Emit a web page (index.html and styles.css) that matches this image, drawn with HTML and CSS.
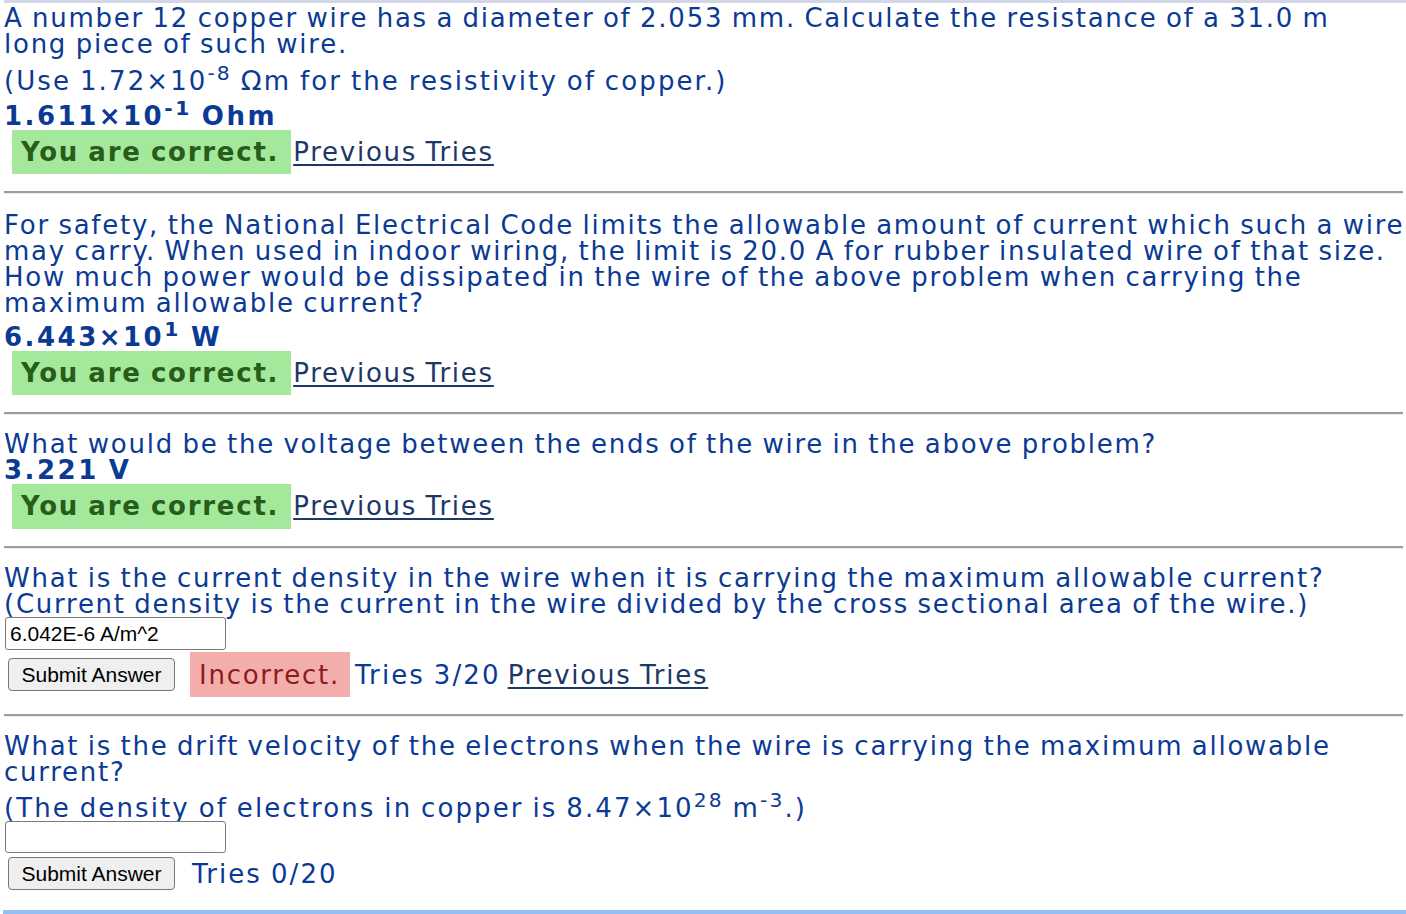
FILE: index.html
```html
<!DOCTYPE html>
<html>
<head>
<meta charset="utf-8">
<link rel="stylesheet" href="styles.css">
</head>
<body>
<div class="topbar"></div>
<div class="page">
  <section class="part p1">
    <div class="q">A number 12 copper wire has a diameter of 2.053 mm. Calculate the resistance of a 31.0 m<br>long piece of such wire.</div>
    <div class="q hint">(Use 1.72×10<sup>-8</sup> <span class="ohm">Ω</span>m for the resistivity of copper.)</div>
    <div class="answer with-sup">1.611×10<sup>-1</sup> Ohm</div>
    <div class="result"><span class="badge correct">You are correct.</span><a class="prev" href="#">Previous Tries</a></div>
  </section>
  <hr class="rule">
  <section class="part p2">
    <div class="q">For safety, the National Electrical Code limits the allowable amount of current which such a wire<br>may carry. When used in indoor wiring, the limit is 20.0 A for rubber insulated wire of that size.<br>How much power would be dissipated in the wire of the above problem when carrying the<br>maximum allowable current?</div>
    <div class="answer with-sup">6.443×10<sup>1</sup> W</div>
    <div class="result"><span class="badge correct">You are correct.</span><a class="prev" href="#">Previous Tries</a></div>
  </section>
  <hr class="rule">
  <section class="part p3">
    <div class="q">What would be the voltage between the ends of the wire in the above problem?</div>
    <div class="answer">3.221 V</div>
    <div class="result"><span class="badge correct">You are correct.</span><a class="prev" href="#">Previous Tries</a></div>
  </section>
  <hr class="rule">
  <section class="part p4">
    <div class="q">What is the current density in the wire when it is carrying the maximum allowable current?<br>(Current density is the current in the wire divided by the cross sectional area of the wire.)</div>
    <input class="field" type="text" value="6.042E-6 A/m^2">
    <div class="submit-row">
      <button class="submit" type="button">Submit Answer</button>
      <span class="badge incorrect">Incorrect.</span>
      <span class="tries">Tries 3/20</span>
      <a class="prev" href="#">Previous Tries</a>
    </div>
  </section>
  <hr class="rule">
  <section class="part p5">
    <div class="q">What is the drift velocity of the electrons when the wire is carrying the maximum allowable<br>current?</div>
    <div class="q hint">(The density of electrons in copper is 8.47×10<sup>28</sup> m<sup>-3</sup>.)</div>
    <input class="field" type="text" value="">
    <div class="submit-row">
      <button class="submit" type="button">Submit Answer</button>
      <span class="tries first">Tries 0/20</span>
    </div>
  </section>
</div>
<div class="bottombar"></div>
</body>
</html>
```

FILE: styles.css
```css
html, body {
  margin: 0;
  padding: 0;
  background: #ffffff;
}

body {
  font-family: "DejaVu Sans", Verdana, sans-serif;
  font-size: 26px;
  line-height: 26px;
  letter-spacing: 1.75px;
  word-spacing: -1.5px;
  color: #0b3a95;
  overflow: hidden;
}

.topbar {
  height: 3px;
  margin-left: 4px;
  background: #d3d5e9;
}

.page {
  margin: 0 3px 0 4px;
}

.part {
  display: flex;
  flex-direction: column;
  align-items: flex-start;
}

.q {
  margin-top: 16px;
  white-space: nowrap;
}

.p1 .q:first-child {
  margin-top: 2px;
}

.p2 .q:first-child {
  margin-top: 18px;
}

.hint {
  margin-top: 11px;
}

.p5 .hint {
  margin-top: 10px;
}

.hint {
  letter-spacing: 2.1px;
}

.ohm {
  font-size: 1.05em;
  line-height: 0;
}

sup {
  font-size: 0.78em;
  line-height: 0;
  vertical-align: 0.5em;
}

.answer {
  font-weight: bold;
  letter-spacing: 2.5px;
}

.answer.with-sup {
  margin-top: 9px;
}

.p2 .answer.with-sup {
  margin-top: 8px;
}

.result {
  display: flex;
  align-items: baseline;
  margin-top: 1px;
  margin-left: 8px;
}

.badge {
  display: inline-block;
  padding: 9px 12px 9px 9px;
}

.correct {
  background: #a4e89b;
  color: #285c1a;
  font-weight: bold;
}

.p3 .correct {
  padding-bottom: 10px;
}

.incorrect {
  background: #f3adab;
  color: #8c1b1b;
  padding: 10px 10px 9px 9px;
}

.prev {
  color: #1b3866;
  text-decoration: underline;
  text-underline-offset: 3px;
  margin-left: 2px;
}

.rule {
  border: 0;
  border-top: 2px solid #9c9c9c;
  border-bottom: 1px solid #ececec;
  height: 0;
  margin: 17px 0 0 0;
}

.field {
  box-sizing: border-box;
  width: 221px;
  height: 33px;
  margin: 0 0 0 1px;
  padding: 0 4px;
  font-family: "Liberation Sans", Arial, sans-serif;
  font-size: 21px;
  letter-spacing: 0;
  word-spacing: 0;
  color: #000;
  border: 1px solid #7a7a7a;
  border-radius: 3px;
  background: #fff;
}

.p5 .field {
  height: 32px;
  margin-top: 0;
}

.submit-row {
  display: flex;
  align-items: center;
  margin-top: 2px;
}

.p5 .submit-row {
  margin-top: 4px;
}

.submit {
  box-sizing: border-box;
  width: 167px;
  height: 33px;
  margin-left: 4px;
  padding: 0;
  font-family: "Liberation Sans", Arial, sans-serif;
  font-size: 21px;
  letter-spacing: 0;
  word-spacing: 0;
  color: #000;
  background: #efefef;
  border: 1px solid #767676;
  border-radius: 4px;
}

.submit-row .incorrect {
  margin-left: 15px;
}

.tries {
  margin-left: 5px;
  letter-spacing: 2.1px;
}

.tries.first {
  margin-left: 17px;
}

.submit-row .prev {
  margin-left: 7px;
}

.bottombar {
  height: 4px;
  margin: 20px 0 0 3px;
  background: #93bff2;
}
```
